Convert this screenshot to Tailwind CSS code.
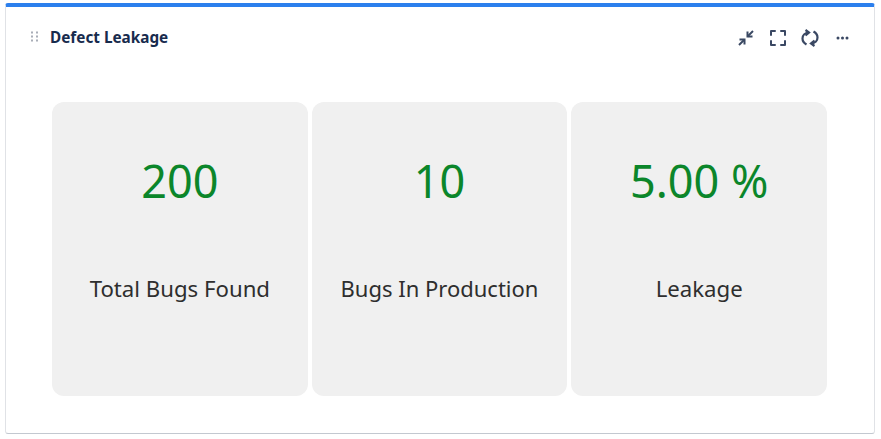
<!DOCTYPE html>
<html lang="en">
<head>
  <meta charset="UTF-8" />
  <title>Defect Leakage</title>
  <script src="https://cdn.jsdelivr.net/npm/@tailwindcss/browser@4"></script>
</head>
<body class="bg-white font-['Noto_Sans',sans-serif] h-[439px] overflow-hidden">

  <!-- Widget -->
  <div class="ml-[5px] mt-[3px] w-[870px] h-[431px] bg-white rounded-[3px] border-t-4 border-t-[#2b7fed] border-x border-b border-x-[#e0e2e6] border-b-[#c3c8d0] flex flex-col">

    <!-- Header -->
    <div class="h-[61px] shrink-0 flex items-center justify-between pl-[24px] pr-[25px]">
      <div class="flex items-center gap-[11px]">
        <svg class="-mt-[2px]" width="9" height="11" viewBox="0 0 9 11" fill="#a9aeb8">
          <rect x="1" y="0.5" width="2" height="2"/><rect x="6" y="0.5" width="2" height="2"/>
          <rect x="1" y="4.5" width="2" height="2"/><rect x="6" y="4.5" width="2" height="2"/>
          <rect x="1" y="8.5" width="2" height="2"/><rect x="6" y="8.5" width="2" height="2"/>
        </svg>
        <span class="text-[15.3px] leading-none font-bold text-[#172b4d] mt-[1px]">Defect Leakage</span>
      </div>
      <div class="flex items-center text-[#3a4863]">
        <svg class="mr-[14px]" width="18" height="18" viewBox="0 0 18 18" fill="none" stroke="currentColor" stroke-width="2">
          <path d="M10.5 7.5L16 2"/><path d="M10.5 2.5V7.5H15.5"/>
          <path d="M7.5 10.5L2 16"/><path d="M2.5 10.5H7.5V15.5"/>
        </svg>
        <svg class="mr-[14px]" width="18" height="18" viewBox="0 0 18 18" fill="none" stroke="currentColor" stroke-width="2" stroke-linecap="round" stroke-linejoin="round">
          <path d="M6 2H2V6"/><path d="M12 2H16V6"/><path d="M2 12V16H6"/><path d="M16 12V16H12"/>
        </svg>
        <svg class="mr-[17px]" width="18" height="18" viewBox="0 0 18 18" fill="none" stroke="currentColor" stroke-width="2.2">
          <path d="M5.5 15.5C3.3 14.3 1.5 12.2 1.5 9.5C1.5 6.5 3.8 3.8 7.5 3.5"/>
          <path d="M4.5 1L8 3.5L4.5 6.5"/>
          <path d="M12.5 2.5C14.7 3.7 16.5 5.8 16.5 8.5C16.5 11.5 14.2 14.2 10.5 14.5"/>
          <path d="M13.5 11.5L10 14.5L13.5 17"/>
        </svg>
        <svg width="13" height="4" viewBox="0 0 13 4" fill="currentColor">
          <circle cx="2" cy="2" r="1.5"/><circle cx="6.5" cy="2" r="1.5"/><circle cx="11" cy="2" r="1.5"/>
        </svg>
      </div>
    </div>

    <!-- Tiles -->
    <div class="mt-[34px] ml-[46px] mr-[47px] h-[294px] grid grid-cols-3 gap-[4px]">
      <div class="bg-[#f0f0f0] rounded-[12px] flex flex-col items-center">
        <div class="mt-[46px] text-[45px] leading-[66px] text-[#0b862a]">200</div>
        <div class="mt-[60px] text-[22.2px] leading-[30px] text-[#2e2e2e]">Total Bugs Found</div>
      </div>
      <div class="bg-[#f0f0f0] rounded-[12px] flex flex-col items-center">
        <div class="mt-[46px] text-[45px] leading-[66px] text-[#0b862a]">10</div>
        <div class="mt-[59px] text-[22px] leading-[30px] text-[#2e2e2e]">Bugs In Production</div>
      </div>
      <div class="bg-[#f0f0f0] rounded-[12px] flex flex-col items-center">
        <div class="mt-[46px] text-[45px] leading-[66px] text-[#0b862a]">5.00 %</div>
        <div class="mt-[60px] text-[22.2px] leading-[30px] text-[#2e2e2e]">Leakage</div>
      </div>
    </div>
  </div>

</body>
</html>
